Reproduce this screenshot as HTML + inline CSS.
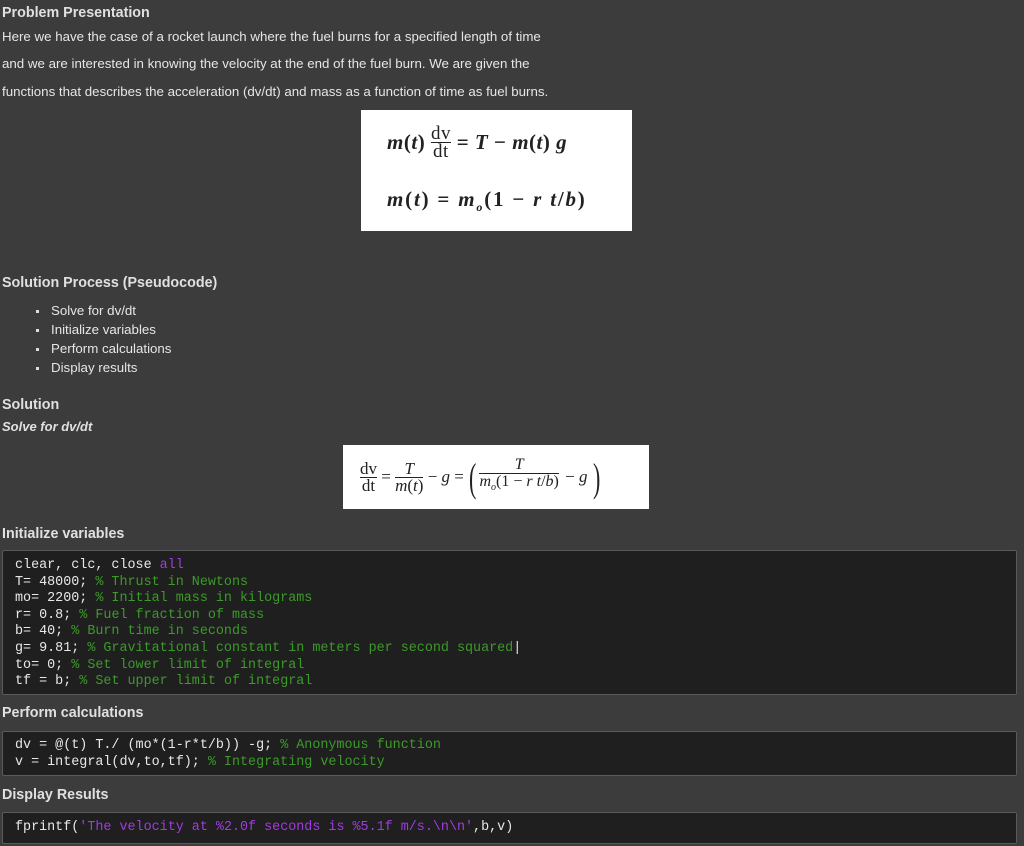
<!DOCTYPE html>
<html><head><meta charset="utf-8"><style>
body{margin:0;width:1024px;height:846px;background:#3c3c3c;color:#e6e6e6;font-family:"Liberation Sans",Arial,sans-serif;position:relative;overflow:hidden}
.a{position:absolute;white-space:nowrap}
.h{font-weight:bold;font-size:14.3px;color:#e0e0e0}
.p{font-size:13.3px}
.li{font-size:13.3px}
.dot{position:absolute;width:3px;height:3px;background:#ddd}
.img{position:absolute;background:#fff;color:#222;font-family:"Liberation Serif",serif}
.code{position:absolute;left:2px;width:1015px;background:#1f1f1f;border:1px solid #5a5a5a;border-radius:2px;font-family:"Liberation Mono","DejaVu Sans Mono",monospace;font-size:13.4px;line-height:16.6px;color:#e8e8e8;box-sizing:border-box;padding-left:12px}
.c{color:#3c9a2a}.k{color:#a23be0}
i{font-style:italic}
.fr{display:inline-block;vertical-align:middle;text-align:center}
.fr>div+div{border-top:1px solid #222}
.row{position:absolute;white-space:nowrap;display:flex;align-items:center}
</style></head><body>
<div class="a h" style="left:2px;top:5px">Problem Presentation</div>
<div class="a p" style="left:2px;top:29px">Here we have the case of a rocket launch where the fuel burns for a specified length of time</div>
<div class="a p" style="left:2px;top:56px">and we are interested in knowing the velocity at the end of the fuel burn. We are given the</div>
<div class="a p" style="left:2px;top:84px">functions that describes the acceleration (dv/dt) and mass as a function of time as fuel burns.</div>

<div class="img" style="left:361px;top:110px;width:271px;height:121px;font-weight:bold;font-size:21px">
 <div class="row" style="left:26px;top:12px;height:40px;letter-spacing:0.5px"><span><i>m</i>(<i>t</i>)&nbsp;</span><span class="fr" style="font-size:19px;line-height:17px;font-weight:normal"><div>dv</div><div>dt</div></span><span>&nbsp;= <i>T</i> − <i>m</i>(<i>t</i>) <i>g</i></span></div>
 <div class="row" style="left:26px;top:76px;height:30px;letter-spacing:1.8px"><span><i>m</i>(<i>t</i>) = <i>m<sub style="font-size:12px">o</sub></i>(1 − <i>r t</i>/<i>b</i>)</span></div>
</div>

<div class="a h" style="left:2px;top:275px">Solution Process (Pseudocode)</div>
<div class="dot" style="left:36px;top:310px"></div><div class="a li" style="left:51px;top:303px">Solve for dv/dt</div>
<div class="dot" style="left:36px;top:329px"></div><div class="a li" style="left:51px;top:322px">Initialize variables</div>
<div class="dot" style="left:36px;top:348px"></div><div class="a li" style="left:51px;top:341px">Perform calculations</div>
<div class="dot" style="left:36px;top:367px"></div><div class="a li" style="left:51px;top:360px">Display results</div>

<div class="a h" style="left:2px;top:397px">Solution</div>
<div class="a h" style="left:2px;top:419px;font-size:13px;font-style:italic">Solve for dv/dt</div>

<div class="img" style="left:343px;top:445px;width:306px;height:64px;font-size:17px">
 <div class="row" style="left:17px;top:8px;height:48px">
  <span class="fr" style="line-height:16px"><div>dv</div><div>dt</div></span>
  <span>&nbsp;=&nbsp;</span>
  <span class="fr" style="line-height:16px"><div><i>T</i></div><div><i>m</i>(<i>t</i>)</div></span>
  <span>&nbsp;− <i>g</i> =&nbsp;</span>
  <span style="font-size:40px;font-weight:100;display:inline-block;transform:scaleX(.55);margin:0 -2px">(</span>
  <span class="fr" style="line-height:16px;font-size:16px;padding:0 2px"><div><i>T</i></div><div><i>m<sub style="font-size:10px">o</sub></i>(1 − <i>r t</i>/<i>b</i>)</div></span>
  <span>&nbsp;− <i>g</i>&nbsp;</span>
  <span style="font-size:40px;font-weight:100;display:inline-block;transform:scaleX(.55);margin:0 -2px">)</span>
 </div>
</div>

<div class="a h" style="left:2px;top:526px">Initialize variables</div>
<div class="code" style="top:550px;height:145px;padding-top:7px">clear, clc, close <span class="k">all</span><br>T= 48000; <span class="c">% Thrust in Newtons</span><br>mo= 2200; <span class="c">% Initial mass in kilograms</span><br>r= 0.8; <span class="c">% Fuel fraction of mass</span><br>b= 40; <span class="c">% Burn time in seconds</span><br>g= 9.81; <span class="c">% Gravitational constant in meters per second squared</span>|<br>to= 0; <span class="c">% Set lower limit of integral</span><br>tf = b; <span class="c">% Set upper limit of integral</span></div>

<div class="a h" style="left:2px;top:705px">Perform calculations</div>
<div class="code" style="top:731px;height:45px;padding-top:6px">dv = @(t) T./ (mo*(1-r*t/b)) -g; <span class="c">% Anonymous function</span><br>v = integral(dv,to,tf); <span class="c">% Integrating velocity</span></div>

<div class="a h" style="left:2px;top:787px">Display Results</div>
<div class="code" style="top:812px;height:32px;padding-top:7px">fprintf(<span class="k">'The velocity at %2.0f seconds is %5.1f m/s.\n\n'</span>,b,v)</div>
</body></html>
